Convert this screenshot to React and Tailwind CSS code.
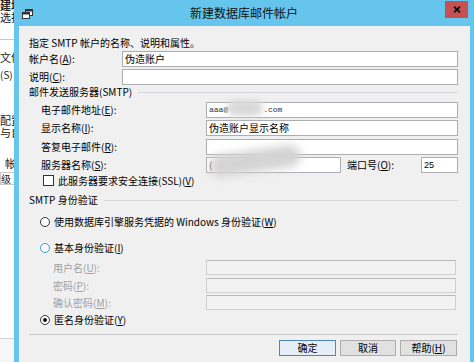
import React from 'react';

const Key = ({ k }) => (
    <>
        (<span className="underline">{k}</span>)
    </>
);

const Input = ({ className = '', children }) => (
    <div className={`h-full bg-white border border-[#abadb3] pl-[2px] flex items-center overflow-hidden ${className}`}>
        {children}
    </div>
);

const GroupHeader = ({ children, className = '' }) => (
    <div className={`flex items-center h-[14px] pr-[12px] ${className}`}>
        <span className="whitespace-nowrap">{children}</span>
        <div className="flex-1 ml-[6px] border-t border-[#d5d5d5]" />
    </div>
);

const Radio = ({ checked, focus }) => (
    <span
        className={`w-[10px] h-[10px] rounded-full bg-white flex items-center justify-center shrink-0 border ${focus ? 'border-[#3c9ad8]' : 'border-[#333333]'}`}
    >
        {checked && <span className="w-[4px] h-[4px] rounded-full bg-[#111]" />}
    </span>
);

// the window behind the dialog, only its left edge shows
const Background = () => (
    <div className="w-full h-full bg-white">
        <div className="w-[14px] h-full overflow-hidden whitespace-nowrap font-['Noto_Sans_CJK_SC',sans-serif] text-[10px] text-[#222] leading-[11px]">
            <div className="h-[10px] font-bold text-[11px] leading-[10px]">建填</div>
            <div className="h-[11px] mt-[2px] text-[11px]">选择</div>
            <div className="mt-[16px] border-t border-[#c8c8c8]" />
            <div className="h-[11px] mt-[12px] text-[11px]">文件</div>
            <div className="h-[11px] mt-[6px]">(S)</div>
            <div className="h-[11px] mt-[35px] text-[11px]">配置</div>
            <div className="h-[11px] mt-[1px] text-[11px]">与自</div>
            <div className="h-[11px] mt-[20px] pl-[5px] text-[11px]">帐</div>
            <div className="mt-[3px] h-[13px] w-[30px] border border-[#c8c8c8] flex items-center">级</div>
            <div className="mt-[153px] border-t border-[#d0d0d0] h-full bg-[#f6f6f6]" />
        </div>
    </div>
);

export default function App() {
    return (
        <div className="relative w-[474px] h-[362px] overflow-hidden bg-white">
            <Background />

            <div className="absolute left-[14px] top-0 w-[460px] h-[362px] bg-[#66c5ec] flex flex-col font-['Noto_Sans_CJK_SC',sans-serif] text-black">
                {/* title bar */}
                <div className="relative h-[26px] shrink-0 flex items-center justify-center">
                    <svg className="absolute left-[8px] top-[9px]" width="11" height="10" viewBox="0 0 11 10">
                        <rect x="3.5" y="0.5" width="7" height="6" fill="#fff" stroke="#333" />
                        <rect x="3.5" y="0.5" width="7" height="2" fill="#333" />
                        <rect x="0.5" y="3.5" width="7" height="6" fill="#fff" stroke="#333" />
                        <rect x="0.5" y="3.5" width="7" height="2" fill="#333" />
                    </svg>
                    <span className="text-[12px] text-[#111] -mt-[1px]">新建数据库邮件帐户</span>
                    <div className="absolute left-[431px] top-[1px] w-[23px] h-[17px] bg-[#c75050] flex items-center justify-center">
                        <svg width="8" height="7" viewBox="0 0 8 7">
                            <path d="M1 0.5 L7 6.5 M7 0.5 L1 6.5" stroke="#111" strokeWidth="1.8" />
                        </svg>
                    </div>
                </div>

                {/* client area */}
                <div className="relative flex-1 ml-[5px] mr-[4px] bg-[#f0f0f0] pl-[10px] text-[10px] leading-none">
                    <div className="mt-[10px] h-[14px] flex items-center">指定 SMTP 帐户的名称、说明和属性。</div>

                    <div className="mt-[1px] h-[16px] flex items-center pr-[12px]">
                        <div className="w-[93px] shrink-0">帐户名<Key k="A" />:</div>
                        <Input className="flex-1">伪造账户</Input>
                    </div>
                    <div className="mt-[2px] h-[16px] flex items-center pr-[12px]">
                        <div className="w-[93px] shrink-0">说明<Key k="C" />:</div>
                        <Input className="flex-1" />
                    </div>

                    <GroupHeader>邮件发送服务器(SMTP)</GroupHeader>

                    <div className="pl-[12px] pr-[12px]">
                        <div className="mt-[3px] h-[16px] flex items-center">
                            <div className="w-[165px] shrink-0">电子邮件地址<Key k="E" />:</div>
                            <Input className="flex-1 text-[8px] font-['Liberation_Mono',monospace] text-[#333]">
                                <span>aaa@</span>
                                <span className="ml-[35px]">.com</span>
                            </Input>
                        </div>
                        <div className="mt-[2px] h-[16px] flex items-center">
                            <div className="w-[165px] shrink-0">显示名称<Key k="I" />:</div>
                            <Input className="flex-1">伪造账户显示名称</Input>
                        </div>
                        <div className="mt-[3px] h-[16px] flex items-center">
                            <div className="w-[165px] shrink-0">答复电子邮件<Key k="R" />:</div>
                            <Input className="flex-1" />
                        </div>
                        <div className="mt-[2px] h-[16px] flex items-center">
                            <div className="w-[165px] shrink-0">服务器名称<Key k="S" />:</div>
                            <Input className="w-[135px] border-[#7d98b3]">(</Input>
                            <div className="w-[80px] pl-[6px] shrink-0">端口号<Key k="O" />:</div>
                            <Input className="flex-1 text-[9px] font-['Liberation_Sans',sans-serif]">25</Input>
                        </div>
                        <div className="mt-[1px] h-[13px] flex items-center pl-[2px]">
                            <span className="w-[11px] h-[11px] bg-white border border-[#333] shrink-0" />
                            <span className="ml-[4px]">此服务器要求安全连接(SSL)<Key k="V" /></span>
                        </div>
                    </div>

                    <GroupHeader className="mt-[6px]">SMTP 身份验证</GroupHeader>

                    <div className="mt-[8px] h-[14px] flex items-center pl-[11px]">
                        <Radio />
                        <span className="ml-[4px]">使用数据库引擎服务凭据的 Windows 身份验证<Key k="W" /></span>
                    </div>
                    <div className="mt-[12px] h-[14px] flex items-center pl-[11px]">
                        <Radio focus />
                        <span className="ml-[4px]">基本身份验证<Key k="I" /></span>
                    </div>

                    <div className="pr-[14px] text-[#a0a0a0]">
                        <div className="mt-[5px] h-[15px] flex items-center">
                            <div className="w-[177px] pl-[24px] shrink-0">用户名<Key k="U" />:</div>
                            <div className="flex-1 h-full bg-[#f2f2f2] border border-[#cfcfcf] border-t-[#b9b9b9]" />
                        </div>
                        <div className="mt-[3px] h-[15px] flex items-center">
                            <div className="w-[177px] pl-[24px] shrink-0">密码<Key k="P" />:</div>
                            <div className="flex-1 h-full bg-[#f2f2f2] border border-[#cfcfcf] border-t-[#b9b9b9]" />
                        </div>
                        <div className="mt-[2px] h-[15px] flex items-center">
                            <div className="w-[177px] pl-[24px] shrink-0">确认密码<Key k="M" />:</div>
                            <div className="flex-1 h-full bg-[#f2f2f2] border border-[#cfcfcf] border-t-[#b9b9b9]" />
                        </div>
                    </div>

                    <div className="mt-[3px] h-[14px] flex items-center pl-[11px]">
                        <Radio checked />
                        <span className="ml-[4px]">匿名身份验证<Key k="Y" /></span>
                    </div>

                    <div className="mt-[7px] mr-[12px] border-t border-[#c8c8c8]" />

                    <div className="mt-[5px] h-[16px] flex justify-end gap-[4px] pr-[13px]">
                        <button className="w-[57px] h-full bg-[#e5eef6] border border-[#4f86b8] flex items-center justify-center">确定</button>
                        <button className="w-[56px] h-full bg-[#e1e1e1] border border-[#adadad] flex items-center justify-center">取消</button>
                        <button className="w-[57px] h-full bg-[#e1e1e1] border border-[#adadad] flex items-center justify-center">帮助<Key k="H" /></button>
                    </div>

                    {/* blurred redactions */}
                    <div className="absolute left-[208px] top-[74px] w-[36px] h-[16px] rounded-full bg-[#d9d9d9] blur-[3px]" />
                    <div className="absolute left-[190px] top-[124px] w-[92px] h-[22px] rounded-full bg-[#d4d4d4] blur-[4px] -rotate-[8deg]" />
                </div>
            </div>
        </div>
    );
}
